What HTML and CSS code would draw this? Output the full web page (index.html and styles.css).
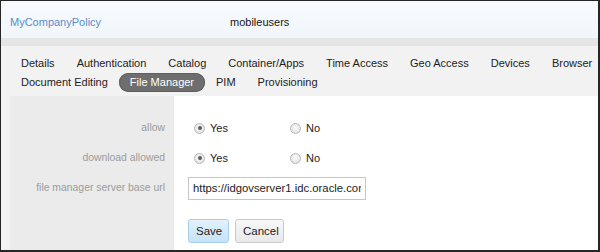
FILE: index.html
```html
<!DOCTYPE html>
<html>
<head>
<meta charset="utf-8">
<link rel="stylesheet" href="styles.css">
</head>
<body>
<div class="frame">
  <header class="header">
    <span class="policy">MyCompanyPolicy</span>
    <span class="group">mobileusers</span>
  </header>
  <div class="band"></div>
  <nav class="tabs">
    <div class="tab-row">
      <span class="tab">Details</span>
      <span class="tab">Authentication</span>
      <span class="tab">Catalog</span>
      <span class="tab">Container/Apps</span>
      <span class="tab">Time Access</span>
      <span class="tab">Geo Access</span>
      <span class="tab">Devices</span>
      <span class="tab">Browser</span>
    </div>
    <div class="tab-row">
      <span class="tab">Document Editing</span>
      <span class="tab active">File Manager</span>
      <span class="tab">PIM</span>
      <span class="tab">Provisioning</span>
    </div>
  </nav>
  <main class="content">
    <div class="labels">
      <div class="label">allow</div>
      <div class="label">download allowed</div>
      <div class="label">file manager server base url</div>
    </div>
    <div class="fields">
      <div class="field">
        <span class="option"><span class="radio checked"></span>Yes</span>
        <span class="option"><span class="radio"></span>No</span>
      </div>
      <div class="field">
        <span class="option"><span class="radio checked"></span>Yes</span>
        <span class="option"><span class="radio"></span>No</span>
      </div>
      <div class="field">
        <input class="url" type="text" value="https://idgovserver1.idc.oracle.com">
      </div>
      <div class="actions">
        <button class="btn save">Save</button>
        <button class="btn cancel">Cancel</button>
      </div>
    </div>
  </main>
</div>
</body>
</html>
```
FILE: styles.css
```css
html, body {
  margin: 0;
  padding: 0;
  overflow: hidden;
}
body {
  font-family: "Liberation Sans", Arial, sans-serif;
  font-size: 11px;
  color: #231c1c;
  background: #fff;
}
.frame {
  box-sizing: border-box;
  width: 600px;
  height: 252px;
  border-style: solid;
  border-color: #262626;
  border-width: 1px 2px 2px 1px;
  display: flex;
  flex-direction: column;
  overflow: hidden;
}
.header {
  height: 37px;
  flex: none;
  display: flex;
  align-items: center;
  padding-left: 9px;
  padding-top: 4px;
  box-sizing: border-box;
  background: linear-gradient(#f8fbfe, #f1f6fb);
}
.policy {
  color: #5b8cc7;
  width: 220px;
}
.group {
  color: #141414;
}
.band {
  height: 8px;
  flex: none;
  background: #e5e5e5;
}
.tabs {
  height: 50px;
  flex: none;
  box-sizing: border-box;
  padding: 8px 0 0 9px;
  background: #f2f2f2;
}
.tab-row {
  display: flex;
  white-space: nowrap;
  height: 19px;
}
.tab {
  padding: 0 11px;
  line-height: 19px;
  height: 19px;
  border-radius: 10px;
}
.tab.active {
  background: #6e6e6e;
  color: #fff;
  box-shadow: inset 0 0 0 1px #5f5f5f;
}
.content {
  flex: 1;
  display: flex;
  padding-left: 9px;
  background: linear-gradient(to right, #f2f2f2 9px, #fff 9px);
}
.labels {
  width: 164px;
  background: #ebebeb;
  box-sizing: border-box;
  padding: 17px 9px 0 0;
  text-align: right;
  color: #9b9b9b;
  font-size: 10.4px;
}
.label {
  height: 30px;
  line-height: 30px;
}
.fields {
  padding: 17px 0 0 14px;
  display: flex;
  flex-direction: column;
}
.field {
  height: 30px;
  display: flex;
  align-items: center;
}
.option {
  display: flex;
  align-items: center;
  gap: 5px;
  width: 96px;
  color: #231c1c;
}
.option:first-child {
  margin-left: 6px;
}
.radio {
  box-sizing: border-box;
  width: 11px;
  height: 11px;
  border-radius: 50%;
  border: 1px solid #b9b9b9;
  background: radial-gradient(circle at 50% 40%, #fafafa, #dcdcdc);
  position: relative;
}
.radio.checked::after {
  content: "";
  position: absolute;
  left: 2.5px;
  top: 2.5px;
  width: 4px;
  height: 4px;
  border-radius: 50%;
  background: #5a5a5a;
}
.url {
  box-sizing: border-box;
  width: 178px;
  height: 23px;
  margin: 0;
  border: 1px solid #c6c6c6;
  padding: 0 4px;
  font-family: "Liberation Sans", Arial, sans-serif;
  font-size: 11.3px;
  color: #231c1c;
  background: #fff;
  outline: none;
}
.actions {
  display: flex;
  gap: 6px;
  margin-top: 16px;
}
.btn {
  box-sizing: border-box;
  height: 24px;
  margin: 0;
  padding: 0 7px;
  border-radius: 3px;
  font-family: "Liberation Sans", Arial, sans-serif;
  font-size: 11.5px;
  color: #231c1c;
}
.save {
  width: 41px;
  border: 1px solid #a6cfe9;
  background: linear-gradient(#e3f2fc, #c6e3f6);
}
.cancel {
  width: 49px;
  border: 1px solid #cacaca;
  background: linear-gradient(#f7f7f7, #e9e9e9);
}
```
